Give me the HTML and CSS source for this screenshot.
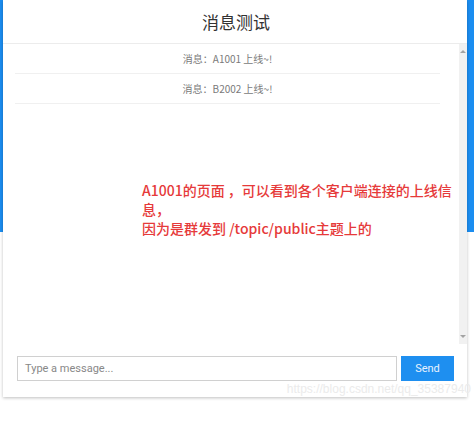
FILE: index.html
```html
<!DOCTYPE html>
<html lang="zh">
<head>
<meta charset="utf-8">
<title>消息测试</title>
<link rel="stylesheet" href="styles.css">
</head>
<body>
<div class="page">
  <div class="card">
    <div class="header">消息测试</div>
    <div class="chat">
      <div class="list">
        <div class="msg">消息：A1001 上线~!</div>
        <div class="msg">消息：B2002 上线~!</div>
        <div class="note">A1001的页面 ，可以看到各个客户端连接的上线信<br>息，<br>因为是群发到 /topic/public主题上的</div>
      </div>
      <div class="scrollbar">
        <span class="arrow up"></span>
        <span class="arrow down"></span>
      </div>
    </div>
    <div class="footer">
      <div class="input">Type a message...</div>
      <div class="send">Send</div>
    </div>
    <div class="watermark">https://blog.csdn.net/qq_35387940</div>
  </div>
</div>
</body>
</html>
```
FILE: styles.css
```css
* { box-sizing: border-box; }
html, body { margin: 0; padding: 0; }
body {
  width: 474px;
  height: 428px;
  overflow: hidden;
  background: linear-gradient(to bottom, #1b8df0 0, #1b8df0 232px, #ffffff 232px);
  font-family: "Noto Sans CJK SC", "Noto Sans", sans-serif;
}
.page {
  padding-left: 3px;
}
.card {
  position: relative;
  width: 464px;
  height: 397px;
  background: #fff;
  box-shadow: 0 1px 3px rgba(0,0,0,0.25);
  display: flex;
  flex-direction: column;
}
.header {
  height: 44px;
  border-bottom: 1px solid #ececec;
  display: flex;
  align-items: center;
  justify-content: center;
  font-size: 17px;
  color: #333;
  padding-left: 2px;
}
.chat {
  height: 300px;
  display: flex;
}
.list {
  flex: 1;
  padding: 0 19px 0 12px;
}
.msg {
  height: 30px;
  border-bottom: 1px solid #f0f0f0;
  display: flex;
  align-items: center;
  justify-content: center;
  font-size: 10px;
  color: #7a7a7a;
  font-family: "Noto Sans CJK SC", Roboto, sans-serif;
}
.note {
  margin-top: 77px;
  margin-left: 127px;
  margin-right: -20px;
  font-size: 14px;
  line-height: 19px;
  font-weight: 500;
  color: #e63a3a;
  white-space: nowrap;
}
.scrollbar {
  width: 8px;
  background: #f1f1f1;
  display: flex;
  flex-direction: column;
  justify-content: space-between;
  align-items: center;
  padding: 6px 0;
}
.arrow {
  width: 0;
  height: 0;
  border-left: 3px solid transparent;
  border-right: 3px solid transparent;
}
.arrow.up { border-bottom: 3px solid #a3a3a3; }
.arrow.down { border-top: 3px solid #a3a3a3; }
.footer {
  display: flex;
  gap: 4px;
  padding: 12px 13px 0 14px;
}
.input {
  flex: 1;
  height: 25px;
  border: 1px solid #d0d0d0;
  font-family: Roboto, sans-serif;
  font-size: 11px;
  color: #888;
  display: flex;
  align-items: center;
  padding-left: 7px;
}
.send {
  width: 53px;
  height: 25px;
  background: #1e8ff0;
  color: #e8f2fe;
  font-family: Roboto, sans-serif;
  font-size: 11px;
  display: flex;
  align-items: center;
  justify-content: center;
}
.watermark {
  position: absolute;
  right: -4px;
  bottom: 1px;
  font-family: "Liberation Sans", sans-serif;
  font-size: 12px;
  color: #ebebeb;
}
```
